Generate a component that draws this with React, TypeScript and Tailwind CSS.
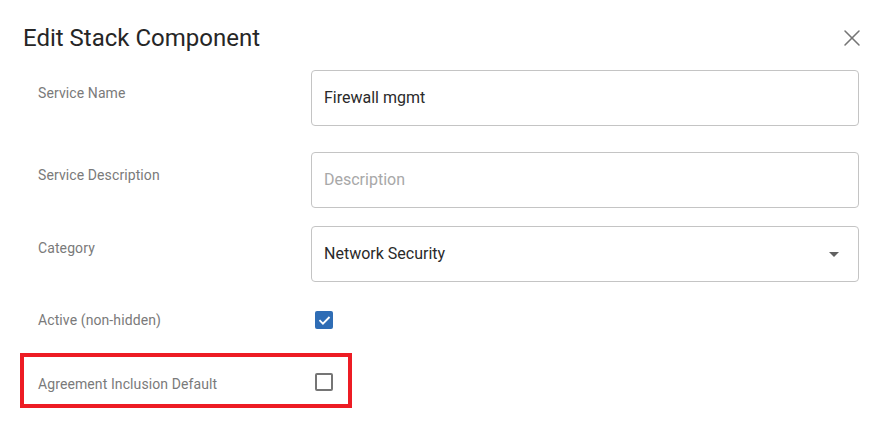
import { X } from "lucide-react"

function Checkbox({ checked }: { checked: boolean }) {
  if (checked) {
    return (
      <span className="flex h-[18px] w-[18px] items-center justify-center rounded-[2px] bg-[#2f6db5]">
        <svg viewBox="0 0 24 24" className="h-[15px] w-[15px]" fill="none" stroke="#fff" strokeWidth="3" strokeLinecap="square">
          <path d="M5 12.5l4.5 4.5L19 7.5" />
        </svg>
      </span>
    )
  }
  return <span className="block h-[18px] w-[18px] rounded-[2px] border-2 border-[#757575] bg-white" />
}

export default function App() {
  return (
    <div className="relative h-[430px] w-[879px] overflow-hidden bg-white font-['Roboto',sans-serif]">
      <div className="flex items-center justify-between pl-[23px] pr-[13px] pt-[22px]">
        <h2 className="text-[24px] leading-[32px] text-[#262626]">Edit Stack Component</h2>
        <X className="h-[28px] w-[28px] text-[#757575]" strokeWidth={1.3} />
      </div>

      <div className="mt-[16px] flex flex-col pr-[20px]">
        <div className="flex h-[56px] items-start">
          <label className="w-[311px] pl-[38px] pt-[13px] text-[14px] leading-[20px] tracking-[0.1px] text-[#7a7a7a]">Service Name</label>
          <div className="flex h-[56px] flex-1 items-center rounded-[4px] border border-[#c4c4c4] px-[12px] text-[16px] text-[#2a2a2a]">
            Firewall mgmt
          </div>
        </div>

        <div className="mt-[26px] flex h-[56px] items-start">
          <label className="w-[311px] pl-[38px] pt-[13px] text-[14px] leading-[20px] tracking-[0.1px] text-[#7a7a7a]">Service Description</label>
          <div className="flex h-[56px] flex-1 items-center rounded-[4px] border border-[#c4c4c4] px-[12px] text-[16px] text-[#a8a8a8]">
            Description
          </div>
        </div>

        <div className="mt-[18px] flex h-[56px] items-start">
          <label className="w-[311px] pl-[38px] pt-[12px] text-[14px] leading-[20px] tracking-[0.1px] text-[#7a7a7a]">Category</label>
          <div className="flex h-[56px] flex-1 items-center justify-between rounded-[4px] border border-[#c4c4c4] pl-[12px] pr-[19px] text-[16px] text-[#2a2a2a]">
            <span>Network Security</span>
            <svg viewBox="0 0 10 5" className="h-[5px] w-[10px]" fill="#616161">
              <path d="M0 0h10L5 5z" />
            </svg>
          </div>
        </div>

        <div className="mt-[29px] flex h-[18px] items-center">
          <label className="w-[315px] pl-[38px] text-[14px] leading-[20px] tracking-[0.1px] text-[#7a7a7a]">Active (non-hidden)</label>
          <Checkbox checked />
        </div>

        <div className="relative mt-[44px] flex h-[18px] items-center">
          <label className="w-[315px] pl-[38px] pt-[3px] text-[14px] leading-[20px] tracking-[0.1px] text-[#7a7a7a]">Agreement Inclusion Default</label>
          <Checkbox checked={false} />
          <div className="pointer-events-none absolute left-[20px] top-[-20px] h-[55px] w-[332px] border-4 border-[#ed1c24]" />
        </div>
      </div>
    </div>
  )
}
